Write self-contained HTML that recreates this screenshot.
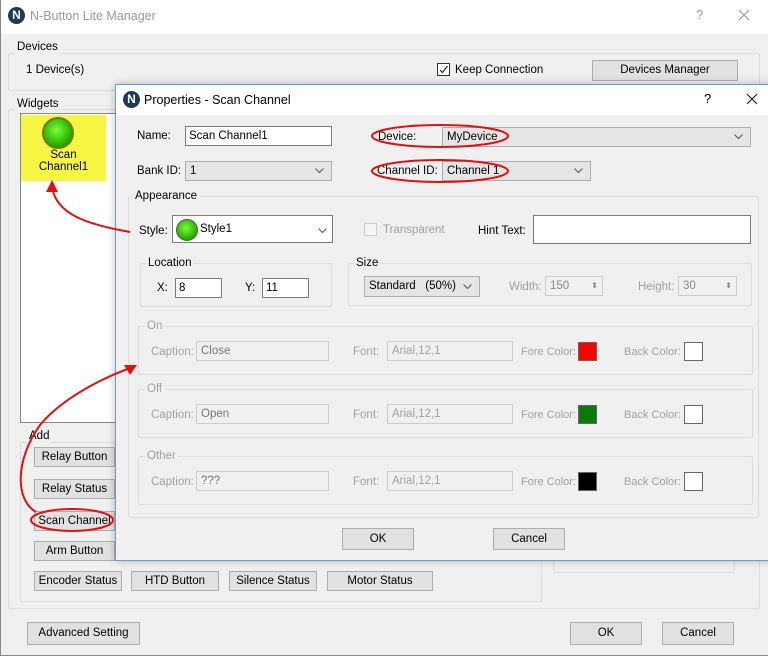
<!DOCTYPE html>
<html><head><meta charset="utf-8"><style>
*{box-sizing:border-box;margin:0;padding:0}
body{width:768px;height:656px;overflow:hidden;background:#f0f0f0;font-family:"Liberation Sans",Arial,sans-serif;font-size:11.5px;color:#000;position:relative}
.a{position:absolute}
.t{position:absolute;white-space:nowrap;line-height:14px}
.g{color:#a0a0a0;font-size:11px}
.btn{position:absolute;background:#e1e1e1;border:1px solid #adadad;text-align:center;line-height:19px;white-space:nowrap}
.grp{position:absolute;border:1px solid #dcdcdc;border-radius:2px}
.in{position:absolute;background:#fff;border:1px solid #7a7a7a;padding-left:3px;line-height:18px}
.dis{position:absolute;background:#f0f0f0;border:1px solid #ccc;padding-left:4px;line-height:18px;color:#a0a0a0;font-size:11.5px}
.cb{position:absolute;background:#e5e5e5;border:1px solid #adadad;padding-left:4px;line-height:19px}
.chev{position:absolute;right:7px;top:50%;margin-top:-3px}
.lg{position:absolute;background:#f0f0f0;padding:0 2px;line-height:13px}
.sw{position:absolute;width:19px;height:19px;border:1px solid #666}
</style></head><body>
<div class="a" style="left:0;top:0;width:768px;height:34px;background:#fff"></div>
<div class="a" style="left:0;top:0;width:1px;height:656px;background:#888"></div>
<div class="a" style="left:0;top:655px;width:768px;height:1px;background:#888"></div>
<div class="a" style="left:8px;top:7px;width:17px;height:17px;border-radius:50%;background:#1d3a5c;color:#fff;font-weight:bold;font-size:12px;text-align:center;line-height:17px">N</div>
<div class="t" style="left:30px;top:9px;color:#999;font-size:12.5px">N-Button Lite Manager</div>
<div class="t" style="left:696px;top:8px;color:#999;font-size:13px">?</div>
<svg class="a" style="left:738px;top:9px" width="12" height="12"><path d="M1 1L11 11M11 1L1 11" stroke="#999" stroke-width="1.2"/></svg>

<div class="grp" style="left:8px;top:53px;width:752px;height:38px"></div>
<div class="lg" style="left:15px;top:41px">Devices</div>
<div class="t" style="left:26px;top:63px">1 Device(s)</div>
<div class="a" style="left:437px;top:63px;width:13px;height:13px;border:1px solid #333;background:#fff"><svg width="11" height="11" style="position:absolute;left:0;top:0"><path d="M2 6L4.5 8.5L9.5 2" stroke="#222" stroke-width="1.2" fill="none"/></svg></div>
<div class="t" style="left:455px;top:63px">Keep Connection</div>
<div class="btn" style="left:592px;top:60px;width:146px;height:21px">Devices Manager</div>

<div class="grp" style="left:8px;top:109px;width:752px;height:500px"></div>
<div class="lg" style="left:15px;top:98px">Widgets</div>
<div class="a" style="left:20px;top:113px;width:100px;height:310px;background:#fff;border:1px solid #888"></div>
<div class="a" style="left:21px;top:115px;width:85px;height:66px;background:#f5f542"></div>
<div class="a" style="left:42px;top:117px;width:32px;height:32px;border-radius:50%;background:radial-gradient(circle at 45% 40%,#7cff3a,#2bb800 60%,#1a6a00);border:2px solid #6d7a20"></div>
<div class="t" style="left:21px;top:149px;width:85px;text-align:center;line-height:12px">Scan<br>Channel1</div>

<div class="grp" style="left:20px;top:442px;width:522px;height:160px"></div>
<div class="lg" style="left:27px;top:430px">Add</div>
<div class="btn" style="left:34px;top:447px;width:81px;height:20px">Relay Button</div>
<div class="btn" style="left:34px;top:479px;width:81px;height:20px">Relay Status</div>
<div class="btn" style="left:34px;top:511px;width:81px;height:20px">Scan Channel</div>
<div class="btn" style="left:34px;top:541px;width:81px;height:20px">Arm Button</div>
<div class="btn" style="left:34px;top:571px;width:88px;height:20px">Encoder Status</div>
<div class="btn" style="left:131px;top:571px;width:88px;height:20px">HTD Button</div>
<div class="btn" style="left:229px;top:571px;width:88px;height:20px">Silence Status</div>
<div class="btn" style="left:327px;top:571px;width:106px;height:20px">Motor Status</div>
<div class="grp" style="left:553px;top:540px;width:182px;height:33px"></div>
<div class="btn" style="left:27px;top:622px;width:113px;height:23px;line-height:21px">Advanced Setting</div>
<div class="btn" style="left:570px;top:622px;width:72px;height:23px;line-height:21px">OK</div>
<div class="btn" style="left:662px;top:622px;width:72px;height:23px;line-height:21px">Cancel</div>

<!-- dialog -->
<div class="a" style="left:115px;top:84px;width:660px;height:477px;background:#f0f0f0;border:1px solid #6a9fd4;box-shadow:0 0 8px rgba(0,0,0,.25)"></div>
<div class="a" style="left:116px;top:85px;width:652px;height:30px;background:#fff"></div>
<div class="a" style="left:123px;top:91px;width:17px;height:17px;border-radius:50%;background:#1d3a5c;color:#fff;font-weight:bold;font-size:12px;text-align:center;line-height:17px">N</div>
<div class="t" style="left:144px;top:93px;font-size:12.5px">Properties - Scan Channel</div>
<div class="t" style="left:704px;top:92px;font-size:13px">?</div>
<svg class="a" style="left:746px;top:93px" width="12" height="12"><path d="M1 1L11 11M11 1L1 11" stroke="#222" stroke-width="1.2"/></svg>

<div class="t" style="left:137px;top:129px">Name:</div>
<div class="in" style="left:185px;top:126px;width:147px;height:20px">Scan Channel1</div>
<div class="t" style="left:378px;top:130px">Device:</div>
<div class="cb" style="left:442px;top:127px;width:309px;height:20px">MyDevice<svg class="chev" width="9" height="6"><path d="M0.5 0.5L4.5 4.5L8.5 0.5" stroke="#555" fill="none"/></svg></div>
<div class="t" style="left:137px;top:164px">Bank ID:</div>
<div class="cb" style="left:185px;top:161px;width:147px;height:20px">1<svg class="chev" width="9" height="6"><path d="M0.5 0.5L4.5 4.5L8.5 0.5" stroke="#555" fill="none"/></svg></div>
<div class="t" style="left:377px;top:164px">Channel ID:</div>
<div class="cb" style="left:442px;top:161px;width:149px;height:20px">Channel 1<svg class="chev" width="9" height="6"><path d="M0.5 0.5L4.5 4.5L8.5 0.5" stroke="#555" fill="none"/></svg></div>

<div class="grp" style="left:128px;top:196px;width:631px;height:322px"></div>
<div class="lg" style="left:133px;top:190px">Appearance</div>
<div class="t" style="left:139px;top:224px">Style:</div>
<div class="a" style="left:172px;top:215px;width:161px;height:28px;background:#fff;border:1px solid #7a7a7a"></div>
<div class="a" style="left:176px;top:219px;width:22px;height:22px;border-radius:50%;background:radial-gradient(circle at 45% 40%,#7cff3a,#2bb800 60%,#1a6a00);border:1px solid #556"></div>
<div class="t" style="left:200px;top:222px">Style1</div>
<svg class="a" style="left:318px;top:228px" width="9" height="6"><path d="M0.5 0.5L4.5 4.5L8.5 0.5" stroke="#555" fill="none"/></svg>
<div class="a" style="left:364px;top:223px;width:13px;height:13px;border:1px solid #ccc;background:#f5f5f5"></div>
<div class="t g" style="left:383px;top:223px;font-size:11.5px">Transparent</div>
<div class="t" style="left:478px;top:224px">Hint Text:</div>
<div class="in" style="left:533px;top:215px;width:218px;height:29px"></div>

<div class="grp" style="left:140px;top:263px;width:192px;height:44px"></div>
<div class="lg" style="left:146px;top:257px">Location</div>
<div class="t" style="left:157px;top:281px">X:</div>
<div class="in" style="left:175px;top:278px;width:47px;height:20px">8</div>
<div class="t" style="left:245px;top:281px">Y:</div>
<div class="in" style="left:262px;top:278px;width:47px;height:20px">11</div>

<div class="grp" style="left:348px;top:263px;width:404px;height:43px"></div>
<div class="lg" style="left:354px;top:257px">Size</div>
<div class="cb" style="left:364px;top:276px;width:116px;height:21px">Standard &nbsp; (50%)<svg class="chev" width="9" height="6"><path d="M0.5 0.5L4.5 4.5L8.5 0.5" stroke="#555" fill="none"/></svg></div>
<div class="t g" style="left:509px;top:280px;font-size:11.5px">Width:</div>
<div class="dis" style="left:545px;top:276px;width:58px;height:20px;color:#888">150<span style="position:absolute;right:4px;top:0;font-size:8px">⬍</span></div>
<div class="t g" style="left:638px;top:280px;font-size:11.5px">Height:</div>
<div class="dis" style="left:678px;top:276px;width:59px;height:20px;color:#888">30<span style="position:absolute;right:4px;top:0;font-size:8px">⬍</span></div>

<div class="grp" style="left:138px;top:326px;width:615px;height:49px"></div>
<div class="lg g" style="left:145px;top:320px;font-size:11.5px">On</div>
<div class="t g" style="left:151px;top:345px;font-size:11.5px">Caption:</div>
<div class="dis" style="left:196px;top:341px;width:133px;height:20px;color:#777">Close</div>
<div class="t g" style="left:353px;top:345px;font-size:11.5px">Font:</div>
<div class="dis" style="left:387px;top:341px;width:126px;height:20px">Arial,12,1</div>
<div class="t g" style="left:521px;top:345px">Fore Color:</div>
<div class="sw" style="left:578px;top:342px;background:#f00"></div>
<div class="t g" style="left:624px;top:345px">Back Color:</div>
<div class="sw" style="left:684px;top:342px;background:#fff"></div>

<div class="grp" style="left:138px;top:389px;width:615px;height:49px"></div>
<div class="lg g" style="left:145px;top:383px;font-size:11.5px">Off</div>
<div class="t g" style="left:151px;top:408px;font-size:11.5px">Caption:</div>
<div class="dis" style="left:196px;top:404px;width:133px;height:20px;color:#777">Open</div>
<div class="t g" style="left:353px;top:408px;font-size:11.5px">Font:</div>
<div class="dis" style="left:387px;top:404px;width:126px;height:20px">Arial,12,1</div>
<div class="t g" style="left:521px;top:408px">Fore Color:</div>
<div class="sw" style="left:578px;top:405px;background:#0a7a0a"></div>
<div class="t g" style="left:624px;top:408px">Back Color:</div>
<div class="sw" style="left:684px;top:405px;background:#fff"></div>

<div class="grp" style="left:138px;top:456px;width:615px;height:49px"></div>
<div class="lg g" style="left:145px;top:450px;font-size:11.5px">Other</div>
<div class="t g" style="left:151px;top:475px;font-size:11.5px">Caption:</div>
<div class="dis" style="left:196px;top:471px;width:133px;height:20px;color:#777">???</div>
<div class="t g" style="left:353px;top:475px;font-size:11.5px">Font:</div>
<div class="dis" style="left:387px;top:471px;width:126px;height:20px">Arial,12,1</div>
<div class="t g" style="left:521px;top:475px">Fore Color:</div>
<div class="sw" style="left:578px;top:472px;background:#000"></div>
<div class="t g" style="left:624px;top:475px">Back Color:</div>
<div class="sw" style="left:684px;top:472px;background:#fff"></div>

<div class="btn" style="left:342px;top:528px;width:72px;height:22px;line-height:20px">OK</div>
<div class="btn" style="left:493px;top:528px;width:72px;height:22px;line-height:20px">Cancel</div>

<svg class="a" style="left:0;top:0" width="768" height="656" viewBox="0 0 768 656">
<g fill="none" stroke="#e01010" stroke-width="2">
<ellipse cx="440" cy="136" rx="68" ry="11"/>
<ellipse cx="440" cy="171" rx="68" ry="11"/>
<ellipse cx="72" cy="520" rx="41" ry="11"/>
<path d="M130 232 C90 225 55 215 52 186"/>
<path d="M36 512 C15 500 15 460 40 425 C65 395 110 375 133 367"/>
</g>
<g fill="#e01010">
<path d="M52 180 L46 192 L58 192 Z"/>
<path d="M137 365 L124 365 L130 375 Z"/>
</g>
</svg>
</body></html>
